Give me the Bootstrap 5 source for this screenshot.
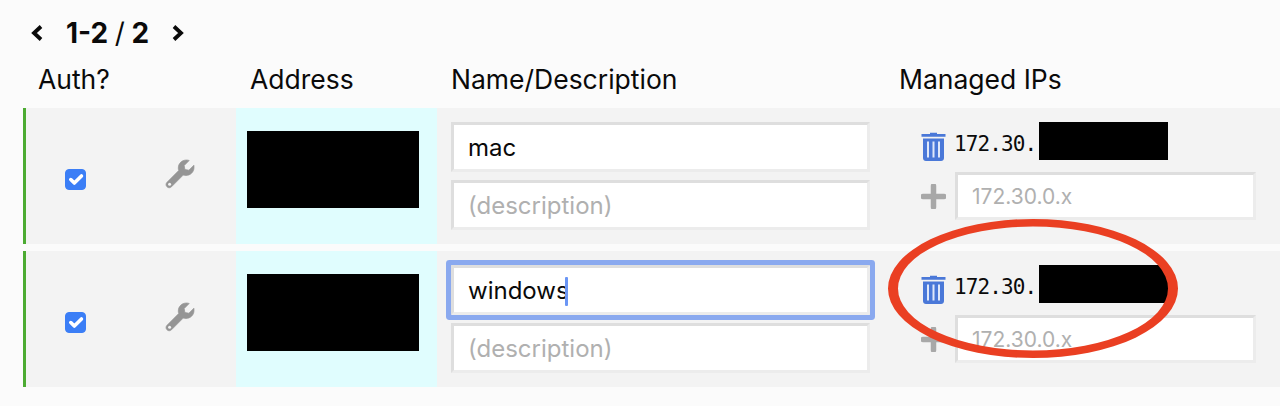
<!DOCTYPE html>
<html lang="en">
<head>
    <meta charset="UTF-8">
    <meta name="viewport" content="width=device-width, initial-scale=1.0">
    <title>Members</title>
    <link href="https://cdn.jsdelivr.net/npm/bootstrap@5.3.3/dist/css/bootstrap.min.css" rel="stylesheet">
    <style>
        body {
            background-color: #fbfbfb;
            font-family: Inter, "Liberation Sans", sans-serif;
            color: #0a0a0a;
            height: 406px;
            overflow: hidden;
        }
        .page-wrap { padding: 18px 0 0 23px; }
        .pager { height: 30px; font-size: 28px; line-height: 30px; font-weight: 700; }
        .pager-text { margin: 0 23px; }
        .pager-text span { font-weight: 400; }
        .head-row { height: 60px; padding-top: 16px; font-size: 26.5px; line-height: 30px; }
        .head-auth { width: 227px; padding-left: 15px; }
        .head-addr { width: 201px; }
        .head-name { width: 448px; }
        .member-row {
            height: 136px;
            margin-bottom: 7px;
            background-color: #f3f3f3;
            border-left: 3px solid #4cab32;
        }
        .auth-cell { width: 210px; padding-right: 41px; padding-left: 39px; }
        .auth-cell .form-check-input {
            width: 21px;
            height: 21px;
            margin: 7px 0 0;
            border-radius: 4px;
            background-color: #3b7ef6;
            border-color: #3b7ef6;
            background-size: 125%;
        }
        .wrench-icon { margin-bottom: 4px; }
        .addr-cell { width: 201px; background-color: #e0fdfe; padding: 23px 0 0 11px; }
        .addr-block { width: 172px; height: 77px; background-color: #000; }
        .name-cell { width: 447px; padding: 14px 0 0 14px; }
        .name-cell .field-box { width: 419px; }
        .plain-input {
            height: 50px;
            border-radius: 0;
            border-width: 3px;
            border-style: solid;
            border-color: #dedede #ececec #ececec #dedede;
            padding: 0 14px;
            font-size: 24px;
            color: #0a0a0a;
            background-color: #fff;
        }
        .plain-input::placeholder { color: #b0b0b0; }
        .plain-input.is-focused { box-shadow: 0 0 0 5px #8aa9ef; border-radius: 1px; }
        .caret-bar {
            position: absolute;
            left: 114px;
            top: 12px;
            width: 3px;
            height: 29px;
            border-radius: 1px;
            background-color: #6b96f5;
        }
        .ip-cell { padding: 14px 0 0 37px; }
        .ip-line { height: 38px; }
        .ip-text {
            font-family: "DejaVu Sans Mono", "Liberation Mono", monospace;
            font-size: 21px;
            letter-spacing: -0.9px;
            margin-left: 8px;
            line-height: 44px;
        }
        .ip-block { width: 129px; height: 38px; background-color: #000; margin-left: 3px; }
        .ip-add { margin-top: 12px; }
        .ip-add .plain-input { width: 301px; height: 48px; font-size: 21px; margin-left: 9px; }
        .trash-icon { margin-top: 10px; }
        .circle-mark { position: absolute; left: 0; top: 0; pointer-events: none; }
    </style>
</head>
<body>
    <div class="page-wrap">
        <div class="pager d-flex align-items-center ps-2">
            <svg width="12" height="16" viewBox="0 0 12 16"><path d="M10 1.5 3 8l7 6.5" fill="none" stroke="#0a0a0a" stroke-width="3.8"/></svg>
            <div class="pager-text">1-2 <span>/</span> 2</div>
            <svg width="12" height="16" viewBox="0 0 12 16"><path d="M2 1.5 9 8l-7 6.5" fill="none" stroke="#0a0a0a" stroke-width="3.8"/></svg>
        </div>
        <div class="head-row d-flex">
            <div class="head-auth">Auth?</div>
            <div class="head-addr">Address</div>
            <div class="head-name">Name/Description</div>
            <div>Managed IPs</div>
        </div>

        <div class="member-row d-flex">
            <div class="auth-cell d-flex align-items-center justify-content-between">
                <input class="form-check-input" type="checkbox" checked>
                <svg class="wrench-icon" width="30" height="30" viewBox="0 0 30 30"><path d="M29 8.5c0 4.6-3.700 8-8.200 8-.9 0-1.800-.1-2.600-.4L6.500 27.800c-1.300 1.300-3.300 1.300-4.500 0-1.300-1.200-1.300-3.200 0-4.500L13.700 11.600c-.3-.8-.4-1.700-.4-2.600C13.300 4.500 16.900 1 21.500 1c1 0 1.900.2 2.700.5l-5 5 .7 4 4 .7 5-5c.1.600.1 1.200.1 1.800z" fill="#959595" stroke="#959595" stroke-width=".7"/><circle cx="4.600" cy="25.300" r="1.500" fill="#f3f3f3"/></svg>
            </div>
            <div class="addr-cell"><div class="addr-block"></div></div>
            <div class="name-cell">
                <div class="field-box mb-2"><input class="form-control plain-input" type="text" value="mac"></div>
                <div class="field-box"><input class="form-control plain-input" type="text" placeholder="(description)"></div>
            </div>
            <div class="ip-cell">
                <div class="ip-line d-flex">
                    <svg class="trash-icon" width="25" height="29" viewBox="0 0 25 29"><path d="M9 2V.8h7V2h8.500v2.700H.500V2zM2 6.500h21V26c0 1.700-1.300 3-3 3H5c-1.700 0-3-1.300-3-3z" fill="#4a78d8"/><path d="M7 9.500v16M12.500 9.500v16M18 9.500v16" stroke="#dfe8fa" stroke-width="2"/></svg>
                    <span class="ip-text">172.30.</span><div class="ip-block"></div>
                </div>
                <div class="ip-add d-flex align-items-center">
                    <svg width="25" height="25" viewBox="0 0 25 25"><path d="M12.500 2v21M2 12.500h21" stroke="#a8a8a8" stroke-width="5.500" stroke-linecap="round"/></svg>
                    <input class="form-control plain-input" type="text" placeholder="172.30.0.x">
                </div>
            </div>
        </div>

        <div class="member-row d-flex">
            <div class="auth-cell d-flex align-items-center justify-content-between">
                <input class="form-check-input" type="checkbox" checked>
                <svg class="wrench-icon" width="30" height="30" viewBox="0 0 30 30"><path d="M29 8.5c0 4.6-3.700 8-8.200 8-.9 0-1.800-.1-2.600-.4L6.500 27.800c-1.300 1.300-3.300 1.300-4.500 0-1.300-1.200-1.300-3.200 0-4.500L13.700 11.600c-.3-.8-.4-1.700-.4-2.600C13.300 4.500 16.900 1 21.500 1c1 0 1.900.2 2.700.5l-5 5 .7 4 4 .7 5-5c.1.600.1 1.200.1 1.800z" fill="#959595" stroke="#959595" stroke-width=".7"/><circle cx="4.600" cy="25.300" r="1.500" fill="#f3f3f3"/></svg>
            </div>
            <div class="addr-cell"><div class="addr-block"></div></div>
            <div class="name-cell">
                <div class="field-box mb-2 position-relative">
                    <input class="form-control plain-input is-focused" type="text" value="windows">
                    <span class="caret-bar"></span>
                </div>
                <div class="field-box"><input class="form-control plain-input" type="text" placeholder="(description)"></div>
            </div>
            <div class="ip-cell">
                <div class="ip-line d-flex">
                    <svg class="trash-icon" width="25" height="29" viewBox="0 0 25 29"><path d="M9 2V.8h7V2h8.500v2.700H.500V2zM2 6.500h21V26c0 1.700-1.300 3-3 3H5c-1.700 0-3-1.300-3-3z" fill="#4a78d8"/><path d="M7 9.500v16M12.500 9.500v16M18 9.500v16" stroke="#dfe8fa" stroke-width="2"/></svg>
                    <span class="ip-text">172.30.</span><div class="ip-block"></div>
                </div>
                <div class="ip-add d-flex align-items-center">
                    <svg width="25" height="25" viewBox="0 0 25 25"><path d="M12.500 2v21M2 12.500h21" stroke="#a8a8a8" stroke-width="5.500" stroke-linecap="round"/></svg>
                    <input class="form-control plain-input" type="text" placeholder="172.30.0.x">
                </div>
            </div>
        </div>
    </div>

    <!-- hand drawn annotation on top of the screenshot -->
    <svg class="circle-mark" width="1280" height="406" viewBox="0 0 1280 406">
        <path fill-rule="evenodd" fill="#ea3f22" d="M888 288.500a145 69.500 0 1 0 290 0a145 69.500 0 1 0-290 0zM898 288.500a135 62 0 1 1 270 0a135 62 0 1 1-270 0z"/>
    </svg>

    <script src="https://cdn.jsdelivr.net/npm/bootstrap@5.3.3/dist/js/bootstrap.bundle.min.js"></script>
</body>
</html>
